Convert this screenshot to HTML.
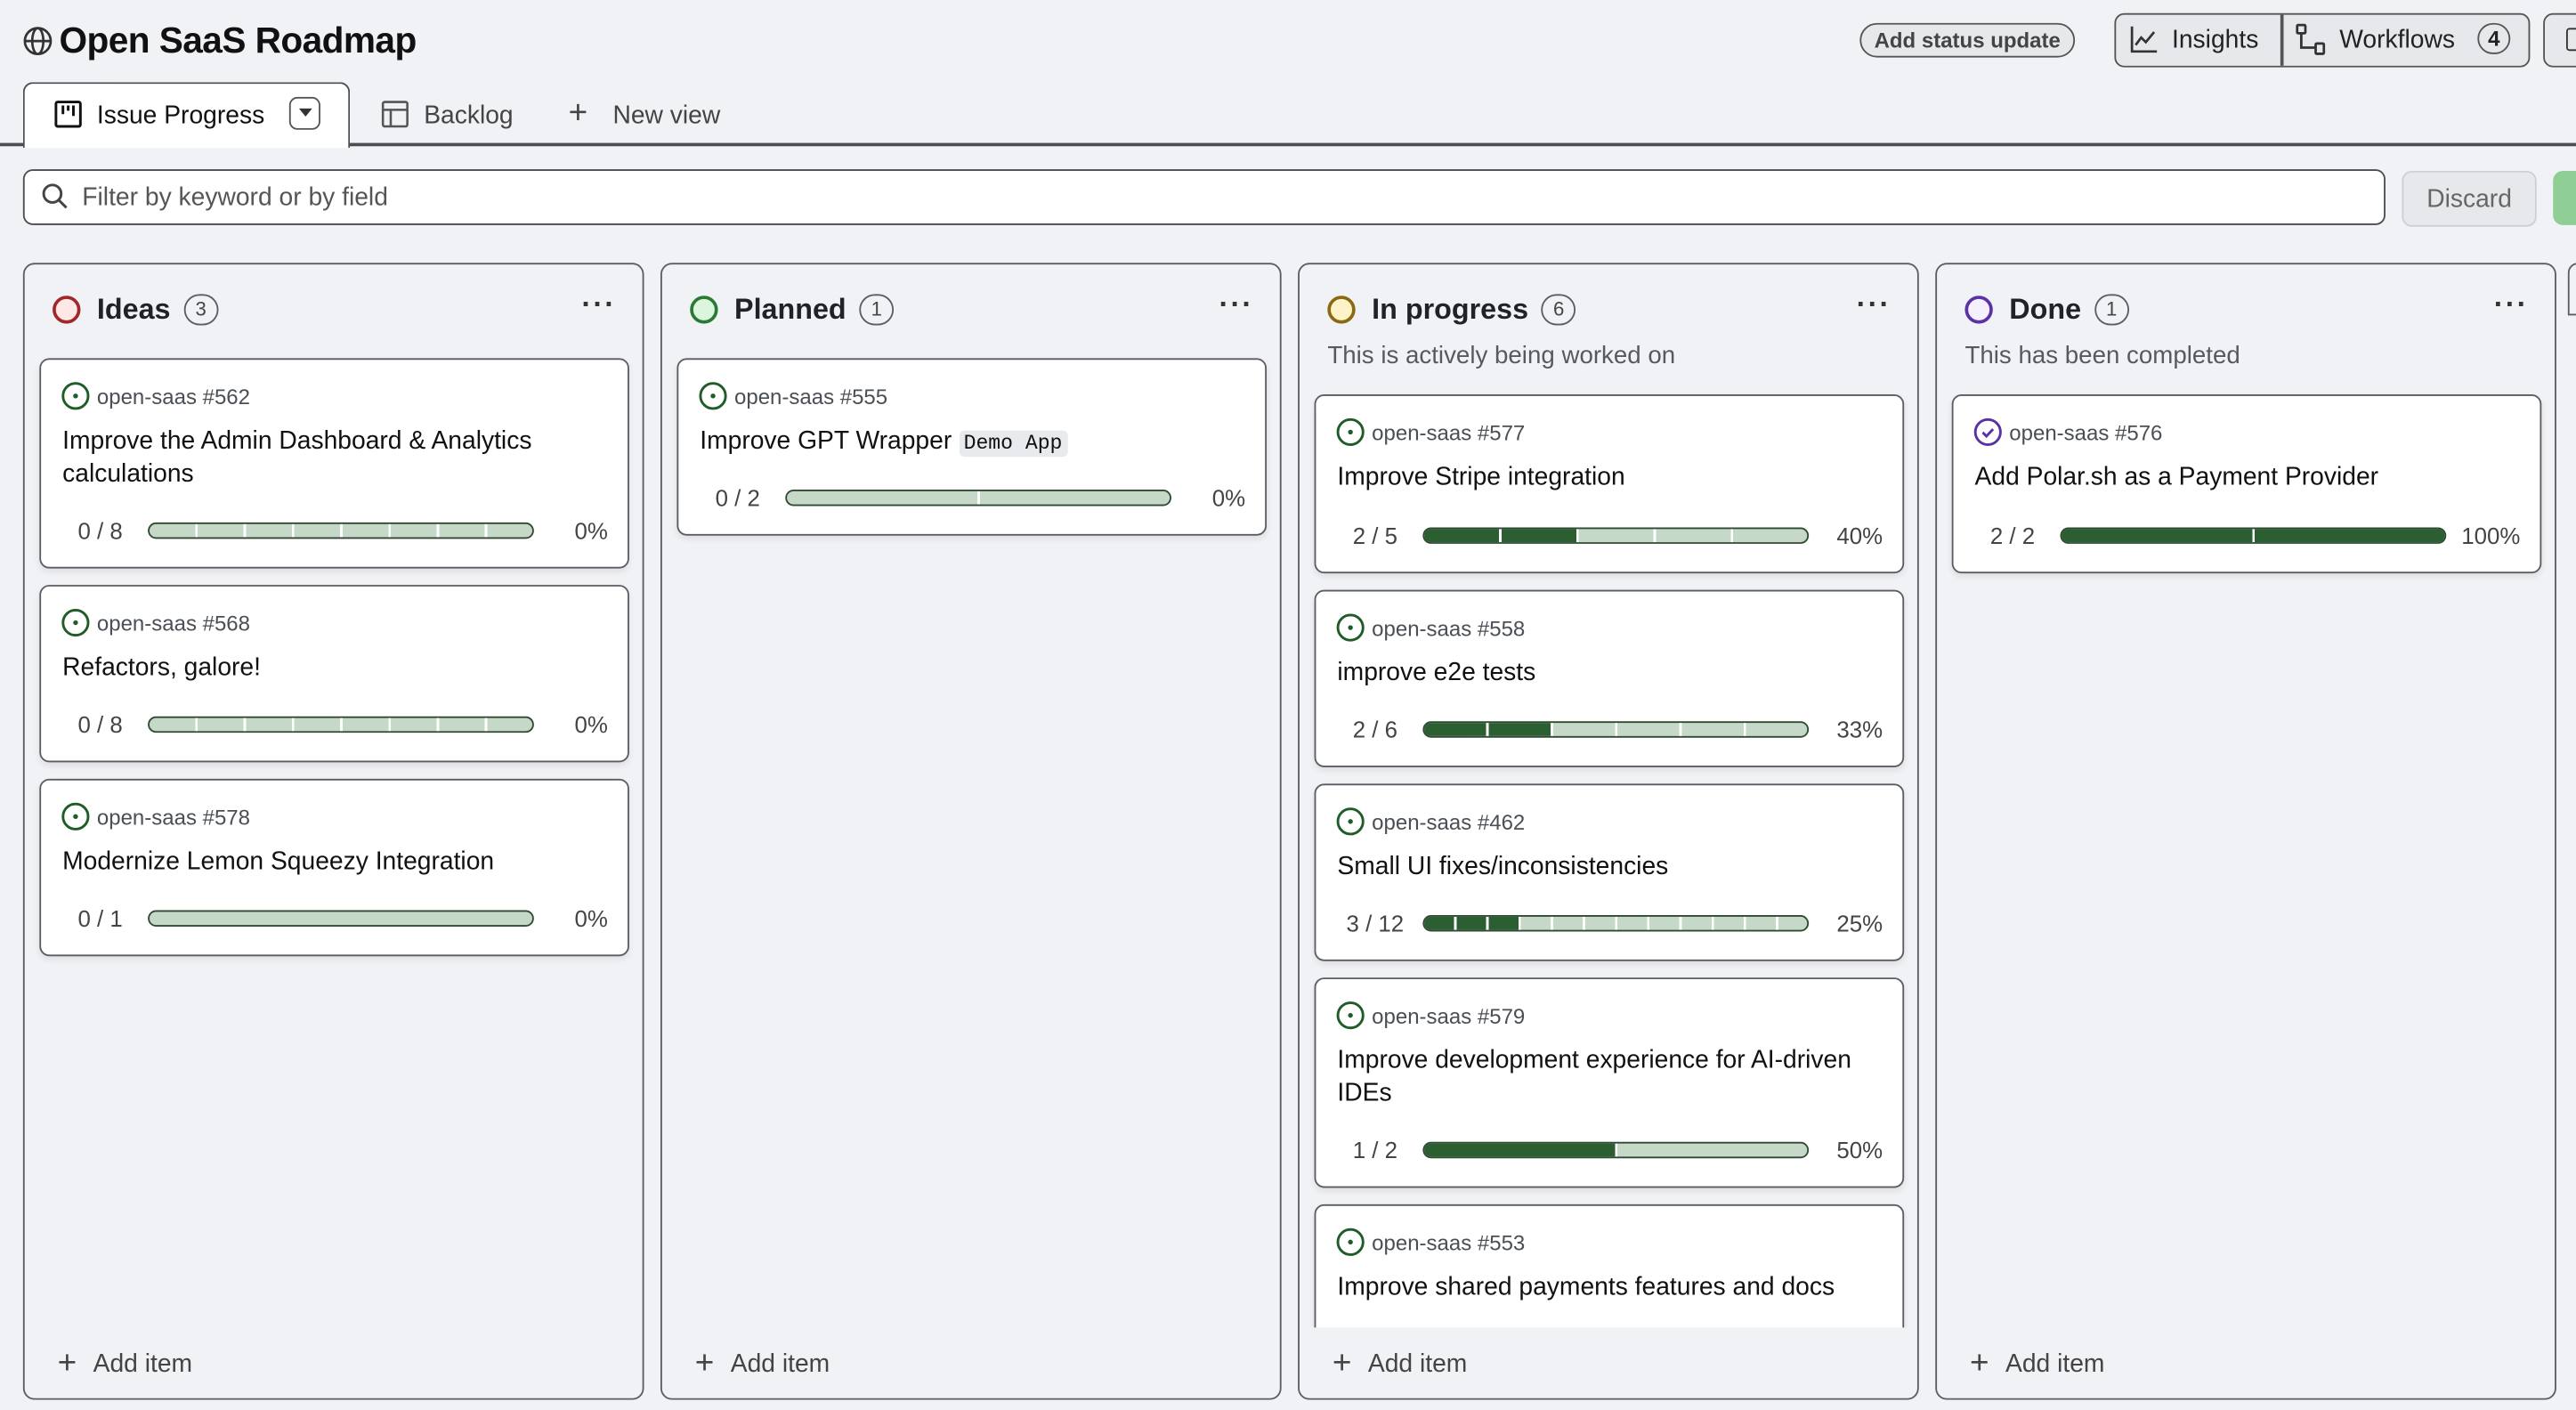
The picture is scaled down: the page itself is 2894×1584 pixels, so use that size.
<!DOCTYPE html>
<html><head><meta charset="utf-8">
<style>
html,body{margin:0;padding:0;background:#f1f2f5;width:2894px;height:1584px;overflow:hidden}
#s{position:absolute;left:0;top:0;width:1568px;height:858px;transform:scale(1.8457);transform-origin:0 0;font-family:"Liberation Sans",sans-serif;color:#1f2328}
.a{position:absolute}
.col{position:absolute;top:160px;width:376px;height:690px;border:1.5px solid #5a5d63;border-radius:7px;background:#f1f2f5;overflow:hidden}
.ch{position:absolute;left:17px;top:17px;height:20px;display:flex;align-items:center;font-size:17.5px;font-weight:bold;white-space:nowrap}
.dot{border-radius:50%;border:2px solid;margin-right:10px;box-sizing:border-box;width:17px;height:17px}
.cnt{display:inline-block;margin-left:8px;width:21px;height:19px;border:1.5px solid #5a5d63;border-radius:10px;font-size:12px;font-weight:normal;text-align:center;line-height:17px;box-sizing:border-box;color:#444}
.more{position:absolute;right:16px;top:14px;font-size:18px;letter-spacing:1px;color:#333;font-weight:bold}
.desc{position:absolute;left:17px;top:47px;font-size:15px;color:#555a61}
.card{position:absolute;left:9px;width:357px;background:#fff;border:1.5px solid #5a5d63;border-radius:6px;box-shadow:0 2px 4px rgba(0,0,0,.08)}
.meta{position:absolute;left:12px;top:13px;height:18px;display:flex;align-items:center;font-size:13px;color:#4a4f55}
.meta svg{margin-right:4px}
.tt{position:absolute;left:13px;top:40px;right:20px;font-size:15.3px;line-height:19.5px;color:#111}
.pr{position:absolute;left:0;right:0;bottom:13px;height:18px;font-size:14px;color:#444}
.pr .l{position:absolute;left:8px;width:56px;text-align:center;line-height:18px}
.pr .p{position:absolute;right:12px;line-height:18px}
.bar{position:absolute;left:65px;width:233px;top:4px;height:8px;border:1.5px solid #2f4a33;border-radius:5px;background:#c6d8c8;overflow:hidden}
.bar i{position:absolute;left:0;top:0;bottom:0;background:#2b5e31}
.bar b{position:absolute;left:0;top:0;bottom:0;right:-1.5px;background:repeating-linear-gradient(90deg,transparent 0,transparent calc(100%/var(--n) - 1.5px),#fff calc(100%/var(--n) - 1.5px),#fff calc(100%/var(--n)))}
.add{position:absolute;left:20px;bottom:9px;font-size:15.3px;color:#444;display:flex;align-items:center}
.add span{font-size:20px;margin-right:10px;font-weight:300}
code{font-family:"Liberation Mono",monospace;font-size:12.5px;background:#e8eaee;padding:1px 3px;border-radius:3px}
</style></head><body><div id="s">
<svg class="a" style="left:14px;top:16px" width="18" height="18" viewBox="0 0 16 16" fill="none" stroke="#333" stroke-width="1.3"><circle cx="8" cy="8" r="7"/><ellipse cx="8" cy="8" rx="3" ry="7"/><line x1="1" y1="8" x2="15" y2="8"/></svg>
<div class="a" style="left:36px;top:12px;font-size:22px;font-weight:bold;letter-spacing:-0.3px;color:#111">Open SaaS Roadmap</div>

<div class="a" style="left:0;top:87px;width:1568px;height:1.5px;background:#4a4d52"></div>
<div class="a" style="left:14px;top:50px;width:197px;height:39px;background:#fff;border:1.5px solid #4a4d52;border-bottom:none;border-radius:6px 6px 0 0"></div>
<svg class="a" style="left:33px;top:61px" width="17" height="17" viewBox="0 0 16 16" fill="none" stroke="#111" stroke-width="1.5"><rect x="1" y="1" width="14" height="14" rx="1"/><line x1="5" y1="3" x2="5" y2="8"/><line x1="8" y1="3" x2="8" y2="6"/><line x1="11" y1="3" x2="11" y2="9"/></svg>
<div class="a" style="left:59px;top:62px;font-size:15.3px;color:#111">Issue Progress</div>
<div class="a" style="left:176px;top:59px;width:17px;height:18px;border:1.5px solid #555;border-radius:5px"><div style="margin:6px auto 0;width:0;height:0;border-left:4px solid transparent;border-right:4px solid transparent;border-top:5px solid #333"></div></div>
<svg class="a" style="left:232px;top:61px" width="17" height="17" viewBox="0 0 16 16" fill="none" stroke="#555" stroke-width="1.3"><rect x="1" y="1" width="14" height="14" rx="1"/><line x1="1" y1="5.5" x2="15" y2="5.5"/><line x1="5.5" y1="5.5" x2="5.5" y2="15"/></svg>
<div class="a" style="left:258px;top:62px;font-size:15.3px;color:#444">Backlog</div>
<div class="a" style="left:346px;top:58px;font-size:20px;color:#444;font-weight:300">+</div>
<div class="a" style="left:373px;top:62px;font-size:15.3px;color:#444">New view</div>

<div class="a" style="left:1132px;top:14px;width:129px;height:19px;border:1.5px solid #555;border-radius:11px;background:#e6e8ec;font-size:13px;font-weight:bold;color:#444;text-align:center;line-height:19px">Add status update</div>
<div class="a" style="left:1287px;top:8px;width:251px;height:31px;border:1.5px solid #555;border-radius:6px;background:#e6e8ec"></div>
<div class="a" style="left:1388px;top:9px;width:1.5px;height:31px;background:#555"></div>
<svg class="a" style="left:1296px;top:15px" width="18" height="18" viewBox="0 0 16 16" fill="none" stroke="#333" stroke-width="1.3"><path d="M1.5 1v13.5H15"/><path d="M3.5 11l3-4 2.5 2.5L13.5 4"/></svg>
<div class="a" style="left:1322px;top:16px;font-size:15.3px;color:#222">Insights</div>
<svg class="a" style="left:1397px;top:14px" width="20" height="20" viewBox="0 0 16 16" fill="none" stroke="#333" stroke-width="1.2"><rect x="1" y="1" width="4" height="4" rx=".5"/><rect x="10" y="10" width="4" height="5" rx=".5"/><path d="M3 5v7h7"/></svg>
<div class="a" style="left:1424px;top:16px;font-size:15.3px;color:#222">Workflows</div>
<div class="a" style="left:1508px;top:14px;width:20px;height:19px;border:1.5px solid #555;border-radius:10px;font-size:13px;font-weight:bold;text-align:center;line-height:17px;box-sizing:border-box;color:#222">4</div>
<div class="a" style="left:1548px;top:8px;width:30px;height:31px;border:1.5px solid #555;border-radius:6px;background:#e6e8ec"></div>
<div class="a" style="left:1562px;top:17px;width:8px;height:12px;border:1.5px solid #333;border-radius:2px"></div>

<div class="a" style="left:14px;top:103px;width:1436px;height:32px;border:1.5px solid #4a4d52;border-radius:6px;background:#fff"></div>
<svg class="a" style="left:25px;top:111px" width="17" height="17" viewBox="0 0 16 16" fill="none" stroke="#444" stroke-width="1.5"><circle cx="6.5" cy="6.5" r="5"/><line x1="10.3" y1="10.3" x2="14.5" y2="14.5"/></svg>
<div class="a" style="left:50px;top:112px;font-size:15.3px;color:#555">Filter by keyword or by field</div>
<div class="a" style="left:1462px;top:104px;width:80px;height:32px;border:1px solid #ccd0d5;border-radius:6px;background:#e6e8ec;font-size:15.3px;color:#666;text-align:center;line-height:33px">Discard</div>
<div class="a" style="left:1554px;top:104px;width:30px;height:33px;border-radius:6px;background:#8fcf95"></div>

<!-- Ideas -->
<div class="col" style="left:14px">
 <div class="ch"><span class="dot" style="border-color:#a0282c;background:#fde8e6"></span>Ideas<span class="cnt">3</span></div>
 <div class="more">···</div>
 <div class="card" style="top:57px;height:126px">
  <div class="meta"><svg width="18" height="18" viewBox="0 0 16 16"><circle cx="8" cy="8" r="6.8" fill="none" stroke="#1f5c28" stroke-width="1.4"/><circle cx="8" cy="8" r="1.3" fill="#1f5c28"/></svg>open-saas #562</div>
  <div class="tt">Improve the Admin Dashboard &amp; Analytics calculations</div>
  <div class="pr"><span class="l">0 / 8</span><div class="bar"><i style="width:0"></i><b style="--n:8"></b></div><span class="p">0%</span></div>
 </div>
 <div class="card" style="top:195px;height:106px">
  <div class="meta"><svg width="18" height="18" viewBox="0 0 16 16"><circle cx="8" cy="8" r="6.8" fill="none" stroke="#1f5c28" stroke-width="1.4"/><circle cx="8" cy="8" r="1.3" fill="#1f5c28"/></svg>open-saas #568</div>
  <div class="tt">Refactors, galore!</div>
  <div class="pr"><span class="l">0 / 8</span><div class="bar"><i style="width:0"></i><b style="--n:8"></b></div><span class="p">0%</span></div>
 </div>
 <div class="card" style="top:313px;height:106px">
  <div class="meta"><svg width="18" height="18" viewBox="0 0 16 16"><circle cx="8" cy="8" r="6.8" fill="none" stroke="#1f5c28" stroke-width="1.4"/><circle cx="8" cy="8" r="1.3" fill="#1f5c28"/></svg>open-saas #578</div>
  <div class="tt">Modernize Lemon Squeezy Integration</div>
  <div class="pr"><span class="l">0 / 1</span><div class="bar"><i style="width:0"></i></div><span class="p">0%</span></div>
 </div>
 <div class="add"><span>+</span>Add item</div>
</div>

<!-- Planned -->
<div class="col" style="left:402px">
 <div class="ch"><span class="dot" style="border-color:#2a7a35;background:#dcf5dd"></span>Planned<span class="cnt">1</span></div>
 <div class="more">···</div>
 <div class="card" style="top:57px;height:106px">
  <div class="meta"><svg width="18" height="18" viewBox="0 0 16 16"><circle cx="8" cy="8" r="6.8" fill="none" stroke="#1f5c28" stroke-width="1.4"/><circle cx="8" cy="8" r="1.3" fill="#1f5c28"/></svg>open-saas #555</div>
  <div class="tt">Improve GPT Wrapper <code>Demo App</code></div>
  <div class="pr"><span class="l">0 / 2</span><div class="bar"><i style="width:0"></i><b style="--n:2"></b></div><span class="p">0%</span></div>
 </div>
 <div class="add"><span>+</span>Add item</div>
</div>

<!-- In progress -->
<div class="col" style="left:790px">
 <div class="ch"><span class="dot" style="border-color:#8a6a10;background:#fdf2c8"></span>In progress<span class="cnt">6</span></div>
 <div class="more">···</div>
 <div class="desc">This is actively being worked on</div>
 <div style="position:absolute;left:0;right:0;top:0;height:647px;overflow:hidden">
 <div class="card" style="top:79px;height:107px">
  <div class="meta"><svg width="18" height="18" viewBox="0 0 16 16"><circle cx="8" cy="8" r="6.8" fill="none" stroke="#1f5c28" stroke-width="1.4"/><circle cx="8" cy="8" r="1.3" fill="#1f5c28"/></svg>open-saas #577</div>
  <div class="tt">Improve Stripe integration</div>
  <div class="pr"><span class="l">2 / 5</span><div class="bar"><i style="width:40%"></i><b style="--n:5"></b></div><span class="p">40%</span></div>
 </div>
 <div class="card" style="top:198px;height:106px">
  <div class="meta"><svg width="18" height="18" viewBox="0 0 16 16"><circle cx="8" cy="8" r="6.8" fill="none" stroke="#1f5c28" stroke-width="1.4"/><circle cx="8" cy="8" r="1.3" fill="#1f5c28"/></svg>open-saas #558</div>
  <div class="tt">improve e2e tests</div>
  <div class="pr"><span class="l">2 / 6</span><div class="bar"><i style="width:33.3%"></i><b style="--n:6"></b></div><span class="p">33%</span></div>
 </div>
 <div class="card" style="top:316px;height:106px">
  <div class="meta"><svg width="18" height="18" viewBox="0 0 16 16"><circle cx="8" cy="8" r="6.8" fill="none" stroke="#1f5c28" stroke-width="1.4"/><circle cx="8" cy="8" r="1.3" fill="#1f5c28"/></svg>open-saas #462</div>
  <div class="tt">Small UI fixes/inconsistencies</div>
  <div class="pr"><span class="l">3 / 12</span><div class="bar"><i style="width:25%"></i><b style="--n:12"></b></div><span class="p">25%</span></div>
 </div>
 <div class="card" style="top:434px;height:126px">
  <div class="meta"><svg width="18" height="18" viewBox="0 0 16 16"><circle cx="8" cy="8" r="6.8" fill="none" stroke="#1f5c28" stroke-width="1.4"/><circle cx="8" cy="8" r="1.3" fill="#1f5c28"/></svg>open-saas #579</div>
  <div class="tt">Improve development experience for AI-driven IDEs</div>
  <div class="pr"><span class="l">1 / 2</span><div class="bar"><i style="width:50%"></i><b style="--n:2"></b></div><span class="p">50%</span></div>
 </div>
 <div class="card" style="top:572px;height:106px">
  <div class="meta"><svg width="18" height="18" viewBox="0 0 16 16"><circle cx="8" cy="8" r="6.8" fill="none" stroke="#1f5c28" stroke-width="1.4"/><circle cx="8" cy="8" r="1.3" fill="#1f5c28"/></svg>open-saas #553</div>
  <div class="tt">Improve shared payments features and docs</div>
 </div>
 </div>
 <div class="add"><span>+</span>Add item</div>
</div>

<!-- Done -->
<div class="col" style="left:1178px">
 <div class="ch"><span class="dot" style="border-color:#5a32a3;background:#f5effe"></span>Done<span class="cnt">1</span></div>
 <div class="more">···</div>
 <div class="desc">This has been completed</div>
 <div class="card" style="top:79px;height:107px">
  <div class="meta"><svg width="18" height="18" viewBox="0 0 16 16"><circle cx="8" cy="8" r="6.8" fill="none" stroke="#5a32a3" stroke-width="1.4"/><path d="M5.2 8.2l2 2 3.6-3.8" fill="none" stroke="#5a32a3" stroke-width="1.4"/></svg>open-saas #576</div>
  <div class="tt">Add Polar.sh as a Payment Provider</div>
  <div class="pr"><span class="l">2 / 2</span><div class="bar"><i style="width:100%"></i><b style="--n:2"></b></div><span class="p">100%</span></div>
 </div>
 <div class="add"><span>+</span>Add item</div>
</div>

<div class="a" style="left:1563px;top:160px;width:10px;height:30px;border:1.5px solid #5a5d63;border-radius:6px 0 0 0"></div>
</div></body></html>
